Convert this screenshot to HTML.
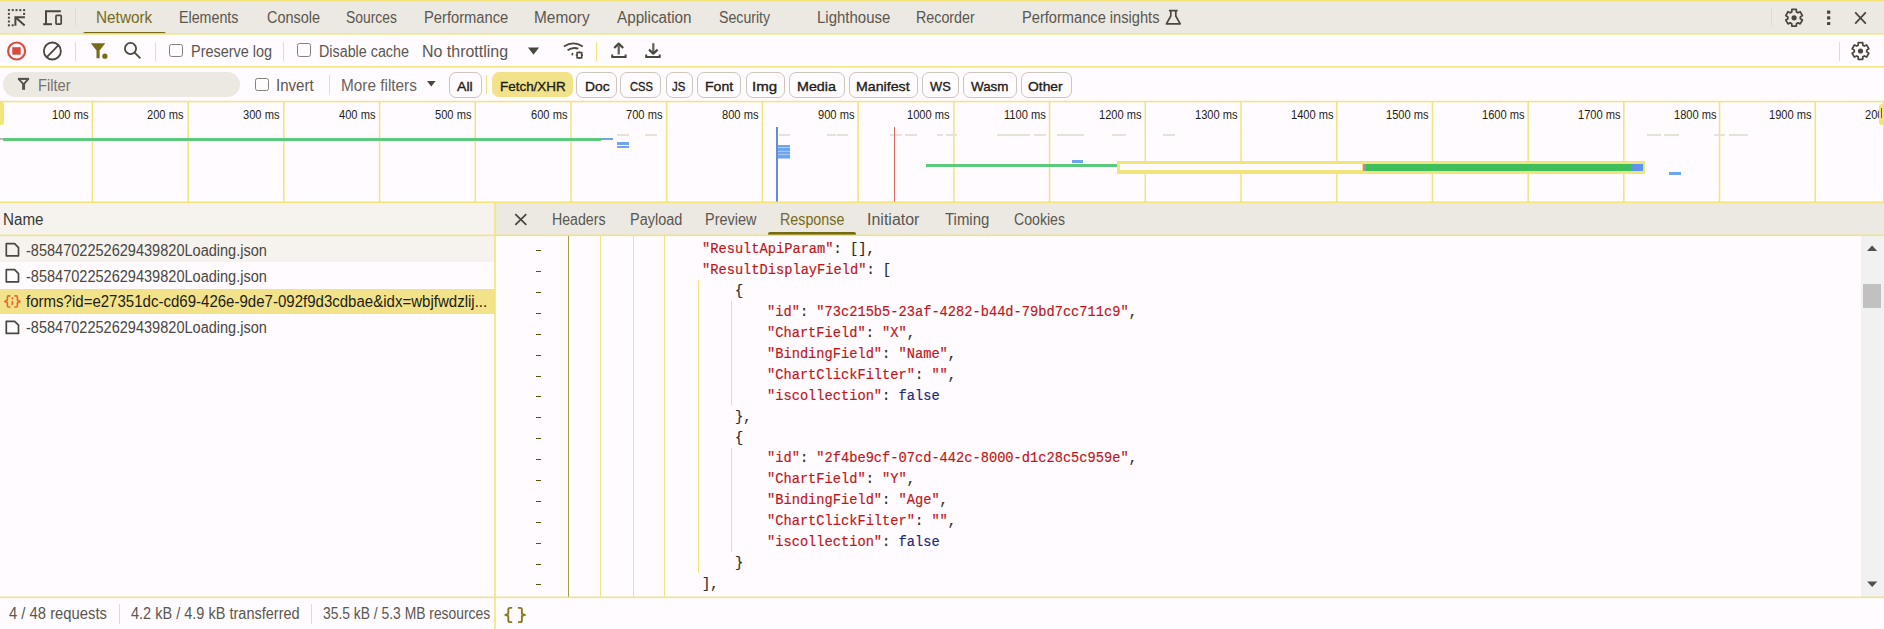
<!DOCTYPE html>
<html><head><meta charset="utf-8">
<style>
*{margin:0;padding:0;box-sizing:border-box}
html,body{width:1884px;height:629px;overflow:hidden;background:#fffbfe;font-family:"Liberation Sans",sans-serif}
.a{position:absolute}
.t{position:absolute;white-space:pre;line-height:20px;transform-origin:0 0;font-family:"Liberation Sans",sans-serif}
.y{position:absolute;background:#f2e47a}
.cl{position:absolute;white-space:pre;line-height:20px;font-family:"Liberation Mono",monospace;font-size:15.3px;color:#2b2a26;-webkit-text-stroke:0.2px currentColor;transform-origin:0 0;transform:scaleX(0.8954)}
.cl .p{color:#c0161a}
.cl .s{color:#c0161a}
.cl .b{color:#1c2a78}
.cl .x{color:#2b2a26}
.dash{position:absolute;left:536px;width:4.5px;height:1px;background:#5d4f14}
.chip{position:absolute;top:71.5px;height:26px;border:1.3px solid #cdc7bb;border-radius:7px}
.cb{position:absolute;width:14px;height:13.6px;border:1.3px solid #85827b;border-radius:2.5px}
svg{position:absolute;overflow:visible}
</style></head><body>
<!-- top bar -->
<div class="a" style="left:0;top:0;width:1884px;height:33px;background:#ece8e2"></div>
<div class="y" style="left:0;top:0;width:1884px;height:1px;background:#f2e47a"></div>
<div class="y" style="left:0;top:1px;width:1884px;height:1px;background:#eee7bb"></div>

<div class="a" style="left:83px;top:31.6px;width:83px;height:2.8px;background:#756914;border-radius:2px 2px 0 0"></div>
<div class="y" style="left:74.8px;top:8.3px;width:1.2px;height:19px"></div>
<div class="y" style="left:1771px;top:8.3px;width:1.2px;height:19px"></div>
<!-- toolbar -->

<div class="y" style="left:74.6px;top:41.5px;width:1.2px;height:19px"></div>
<div class="y" style="left:154.9px;top:41.5px;width:1.2px;height:19px"></div>
<div class="y" style="left:283.1px;top:41.5px;width:1.2px;height:19px"></div>
<div class="y" style="left:595.5px;top:41.5px;width:1.2px;height:19px"></div>
<div class="y" style="left:1838.5px;top:41.5px;width:1.2px;height:19px"></div>
<div class="cb" style="left:168.5px;top:43.5px"></div>
<div class="cb" style="left:297.3px;top:43.3px"></div>
<!-- filter bar -->
<div class="a" style="left:3px;top:72px;width:237px;height:24.5px;background:#ece8e2;border-radius:13px"></div>
<div class="cb" style="left:254.5px;top:77.6px"></div>
<div class="y" style="left:328.7px;top:74.6px;width:1.2px;height:19px"></div>
<div class="y" style="left:486px;top:74.6px;width:1.2px;height:19px"></div>
<div class="chip" style="left:449px;width:32.5px"></div>
<div class="a" style="left:492px;top:72px;width:81.2px;height:24.6px;background:#f2e38a;border-radius:7px"></div>
<div class="chip" style="left:576px;width:41.1px"></div>
<div class="chip" style="left:620.4px;width:40.7px"></div>
<div class="chip" style="left:665.6px;width:27.8px"></div>
<div class="chip" style="left:696.8px;width:43.9px"></div>
<div class="chip" style="left:745.8px;width:39px"></div>
<div class="chip" style="left:789.3px;width:55.3px"></div>
<div class="chip" style="left:849px;width:68.5px"></div>
<div class="chip" style="left:922px;width:36.7px"></div>
<div class="chip" style="left:962.7px;width:54px"></div>
<div class="chip" style="left:1020.7px;width:51.7px"></div>

<!-- timeline -->
<svg style="left:0;top:0" width="1884" height="629"><g fill="#f2e47a"><rect x="91.68" y="101" width="1.5" height="101"/>
<rect x="187.39" y="101" width="1.5" height="101"/>
<rect x="283.11" y="101" width="1.5" height="101"/>
<rect x="378.82" y="101" width="1.5" height="101"/>
<rect x="474.54" y="101" width="1.5" height="101"/>
<rect x="570.25" y="101" width="1.5" height="101"/>
<rect x="665.96" y="101" width="1.5" height="101"/>
<rect x="761.68" y="101" width="1.5" height="101"/>
<rect x="857.39" y="101" width="1.5" height="101"/>
<rect x="953.11" y="101" width="1.5" height="101"/>
<rect x="1048.82" y="101" width="1.5" height="101"/>
<rect x="1144.53" y="101" width="1.5" height="101"/>
<rect x="1240.25" y="101" width="1.5" height="101"/>
<rect x="1335.96" y="101" width="1.5" height="101"/>
<rect x="1431.68" y="101" width="1.5" height="101"/>
<rect x="1527.39" y="101" width="1.5" height="101"/>
<rect x="1623.10" y="101" width="1.5" height="101"/>
<rect x="1718.82" y="101" width="1.5" height="101"/>
<rect x="1814.53" y="101" width="1.5" height="101"/></g></svg>

<div class="y" style="left:1882.5px;top:101px;width:1.5px;height:101px"></div>
<div class="t" style="left:51.72px;top:104.80px;font-size:13px;color:#1f1d17;transform:scaleX(0.855)">100 ms</div>
<div class="t" style="left:147.49px;top:104.80px;font-size:13px;color:#1f1d17;transform:scaleX(0.855)">200 ms</div>
<div class="t" style="left:243.26px;top:104.80px;font-size:13px;color:#1f1d17;transform:scaleX(0.855)">300 ms</div>
<div class="t" style="left:339.03px;top:104.80px;font-size:13px;color:#1f1d17;transform:scaleX(0.855)">400 ms</div>
<div class="t" style="left:434.80px;top:104.80px;font-size:13px;color:#1f1d17;transform:scaleX(0.855)">500 ms</div>
<div class="t" style="left:530.57px;top:104.80px;font-size:13px;color:#1f1d17;transform:scaleX(0.855)">600 ms</div>
<div class="t" style="left:626.34px;top:104.80px;font-size:13px;color:#1f1d17;transform:scaleX(0.855)">700 ms</div>
<div class="t" style="left:722.11px;top:104.80px;font-size:13px;color:#1f1d17;transform:scaleX(0.855)">800 ms</div>
<div class="t" style="left:817.88px;top:104.80px;font-size:13px;color:#1f1d17;transform:scaleX(0.855)">900 ms</div>
<div class="t" style="left:907.47px;top:104.80px;font-size:13px;color:#1f1d17;transform:scaleX(0.855)">1000 ms</div>
<div class="t" style="left:1004.07px;top:104.80px;font-size:13px;color:#1f1d17;transform:scaleX(0.855)">1100 ms</div>
<div class="t" style="left:1099.01px;top:104.80px;font-size:13px;color:#1f1d17;transform:scaleX(0.855)">1200 ms</div>
<div class="t" style="left:1194.78px;top:104.80px;font-size:13px;color:#1f1d17;transform:scaleX(0.855)">1300 ms</div>
<div class="t" style="left:1290.55px;top:104.80px;font-size:13px;color:#1f1d17;transform:scaleX(0.855)">1400 ms</div>
<div class="t" style="left:1386.32px;top:104.80px;font-size:13px;color:#1f1d17;transform:scaleX(0.855)">1500 ms</div>
<div class="t" style="left:1482.09px;top:104.80px;font-size:13px;color:#1f1d17;transform:scaleX(0.855)">1600 ms</div>
<div class="t" style="left:1577.86px;top:104.80px;font-size:13px;color:#1f1d17;transform:scaleX(0.855)">1700 ms</div>
<div class="t" style="left:1673.63px;top:104.80px;font-size:13px;color:#1f1d17;transform:scaleX(0.855)">1800 ms</div>
<div class="t" style="left:1769.40px;top:104.80px;font-size:13px;color:#1f1d17;transform:scaleX(0.855)">1900 ms</div>
<div class="t" style="left:1865.17px;top:104.80px;font-size:13px;color:#1f1d17;transform:scaleX(0.855)">2000 ms</div>
<!-- timeline bars -->
<div class="a" style="left:0;top:138.3px;width:3px;height:2px;background:#bdbab3"></div>
<div class="a" style="left:3px;top:138px;width:598px;height:2.6px;background:#5cc97c"></div>
<div class="a" style="left:601.2px;top:137.9px;width:12.1px;height:2.6px;background:#6ea4f0"></div>
<div class="a" style="left:617px;top:142.2px;width:12px;height:2.4px;background:#6ea4f0"></div>
<div class="a" style="left:617px;top:145.5px;width:12px;height:2.4px;background:#6ea4f0"></div>
<div class="a" style="left:617.3px;top:134.4px;width:12.1px;height:2px;background:#e8e3d6"></div><div class="a" style="left:645px;top:134.4px;width:12.0px;height:2px;background:#e8e3d6"></div><div class="a" style="left:778.7px;top:134.4px;width:11.1px;height:2px;background:#e8e3d6"></div><div class="a" style="left:826.5px;top:134.4px;width:9.3px;height:2px;background:#e8e3d6"></div><div class="a" style="left:836.5px;top:134.4px;width:11.8px;height:2px;background:#e8e3d6"></div><div class="a" style="left:889.6px;top:134.4px;width:12.1px;height:2px;background:#e8e3d6"></div><div class="a" style="left:904.7px;top:134.4px;width:12.1px;height:2px;background:#e8e3d6"></div><div class="a" style="left:937px;top:134.4px;width:6.0px;height:2px;background:#e8e3d6"></div><div class="a" style="left:946px;top:134.4px;width:11.0px;height:2px;background:#e8e3d6"></div><div class="a" style="left:996.8px;top:134.4px;width:32.8px;height:2px;background:#e8e3d6"></div><div class="a" style="left:1033.7px;top:134.4px;width:12.3px;height:2px;background:#e8e3d6"></div><div class="a" style="left:1057px;top:134.4px;width:27.0px;height:2px;background:#e8e3d6"></div><div class="a" style="left:1112px;top:134.4px;width:13.5px;height:2px;background:#e8e3d6"></div><div class="a" style="left:1163px;top:134.4px;width:11.5px;height:2px;background:#e8e3d6"></div><div class="a" style="left:1646.5px;top:134.4px;width:14.1px;height:2px;background:#e8e3d6"></div><div class="a" style="left:1664px;top:134.4px;width:14.5px;height:2px;background:#e8e3d6"></div><div class="a" style="left:1713.5px;top:134.4px;width:11.5px;height:2px;background:#e8e3d6"></div><div class="a" style="left:1729px;top:134.4px;width:19.0px;height:2px;background:#e8e3d6"></div>
<div class="a" style="left:776.1px;top:127px;width:2px;height:75px;background:#5f8fd8"></div>
<div class="a" style="left:778.4px;top:145px;width:11.3px;height:14px;background:repeating-linear-gradient(#6ea4f0 0 2.3px,#a9c8f6 2.3px 3.4px)"></div>
<div class="a" style="left:893.5px;top:127px;width:1.2px;height:75px;background:#e2685c"></div>
<div class="a" style="left:926px;top:164.2px;width:191.6px;height:2.6px;background:#5cc97c"></div>
<div class="a" style="left:1071.7px;top:160px;width:11.3px;height:3px;background:#6ea4f0"></div>
<div class="a" style="left:1117px;top:161.4px;width:528px;height:12.5px;background:#f2e47a"></div>
<div class="a" style="left:1119.8px;top:164.1px;width:242.7px;height:6.3px;background:#fffbfe"></div>
<div class="a" style="left:1362.5px;top:164px;width:3px;height:7px;background:#9c9a94"></div>
<div class="a" style="left:1365.5px;top:164px;width:265px;height:7px;background:#3fbf5c"></div>
<div class="a" style="left:1630.5px;top:164px;width:12px;height:7px;background:#5e95ec"></div>
<div class="a" style="left:1668.6px;top:171.8px;width:12.2px;height:2.8px;background:#6ea4f0"></div>
<div class="a" style="left:0;top:102.4px;width:3.8px;height:23px;background:#f2e47a;border-radius:0 3px 3px 0"></div>
<div class="a" style="left:1878.8px;top:104px;width:6px;height:20.5px;background:#f2e47a;border-radius:3px 0 0 3px"></div>
<div class="a" style="left:1880.8px;top:108px;width:1.6px;height:10px;background:#6d6418"></div>

<!-- headers -->
<div class="a" style="left:0;top:203px;width:495px;height:32.3px;background:#f6f3ef"></div>
<div class="a" style="left:495px;top:203px;width:1389px;height:32.3px;background:#ece8e2"></div>

<div class="a" style="left:768.4px;top:232.3px;width:87.4px;height:2.8px;background:#756914;border-radius:2px 2px 0 0"></div>
<!-- rows -->
<div class="a" style="left:0;top:236.2px;width:494.5px;height:25.8px;background:#f6f3ef"></div>
<div class="a" style="left:0;top:288.9px;width:494.5px;height:25.5px;background:#f2e38a"></div>
<!-- code area -->
<div class="a" style="left:567.6px;top:236.2px;width:1.5px;height:361px;background:#a89c3e"></div>
<div class="y" style="left:599.6px;top:236.2px;width:1.2px;height:361px"></div>
<div class="y" style="left:632.5px;top:236.2px;width:1.2px;height:361px"></div>
<div class="y" style="left:664.3px;top:236.2px;width:1.2px;height:361px"></div>
<div class="y" style="left:697.5px;top:280.4px;width:1.2px;height:292.5px"></div>
<div class="y" style="left:730.5px;top:301.3px;width:1.2px;height:104.2px"></div>
<div class="y" style="left:730.5px;top:447.6px;width:1.2px;height:104.3px"></div>
<div class="cl" style="left:701.70px;top:239.40px"><span class="p">"ResultApiParam"</span><span class="x">: [],</span></div>
<div class="dash" style="top:250px"></div>
<div class="cl" style="left:701.70px;top:260.30px"><span class="p">"ResultDisplayField"</span><span class="x">: [</span></div>
<div class="dash" style="top:271px"></div>
<div class="cl" style="left:734.58px;top:281.20px"><span class="x">{</span></div>
<div class="dash" style="top:292px"></div>
<div class="cl" style="left:767.46px;top:302.10px"><span class="p">"id"</span><span class="x">: </span><span class="s">"73c215b5-23af-4282-b44d-79bd7cc711c9"</span><span class="x">,</span></div>
<div class="dash" style="top:313px"></div>
<div class="cl" style="left:767.46px;top:323.00px"><span class="p">"ChartField"</span><span class="x">: </span><span class="s">"X"</span><span class="x">,</span></div>
<div class="dash" style="top:334px"></div>
<div class="cl" style="left:767.46px;top:343.90px"><span class="p">"BindingField"</span><span class="x">: </span><span class="s">"Name"</span><span class="x">,</span></div>
<div class="dash" style="top:355px"></div>
<div class="cl" style="left:767.46px;top:364.80px"><span class="p">"ChartClickFilter"</span><span class="x">: </span><span class="s">""</span><span class="x">,</span></div>
<div class="dash" style="top:376px"></div>
<div class="cl" style="left:767.46px;top:385.70px"><span class="p">"iscollection"</span><span class="x">: </span><span class="b">false</span></div>
<div class="dash" style="top:396px"></div>
<div class="cl" style="left:734.58px;top:406.60px"><span class="x">},</span></div>
<div class="dash" style="top:417px"></div>
<div class="cl" style="left:734.58px;top:427.50px"><span class="x">{</span></div>
<div class="dash" style="top:438px"></div>
<div class="cl" style="left:767.46px;top:448.40px"><span class="p">"id"</span><span class="x">: </span><span class="s">"2f4be9cf-07cd-442c-8000-d1c28c5c959e"</span><span class="x">,</span></div>
<div class="dash" style="top:459px"></div>
<div class="cl" style="left:767.46px;top:469.30px"><span class="p">"ChartField"</span><span class="x">: </span><span class="s">"Y"</span><span class="x">,</span></div>
<div class="dash" style="top:480px"></div>
<div class="cl" style="left:767.46px;top:490.20px"><span class="p">"BindingField"</span><span class="x">: </span><span class="s">"Age"</span><span class="x">,</span></div>
<div class="dash" style="top:501px"></div>
<div class="cl" style="left:767.46px;top:511.10px"><span class="p">"ChartClickFilter"</span><span class="x">: </span><span class="s">""</span><span class="x">,</span></div>
<div class="dash" style="top:522px"></div>
<div class="cl" style="left:767.46px;top:532.00px"><span class="p">"iscollection"</span><span class="x">: </span><span class="b">false</span></div>
<div class="dash" style="top:543px"></div>
<div class="cl" style="left:734.58px;top:552.90px"><span class="x">}</span></div>
<div class="dash" style="top:564px"></div>
<div class="cl" style="left:701.70px;top:573.80px"><span class="x">],</span></div>
<div class="dash" style="top:584px"></div>
<!-- scrollbar -->
<div class="a" style="left:1861px;top:236.2px;width:23px;height:361px;background:#f1f1f1"></div>
<div class="a" style="left:1863.2px;top:284px;width:18px;height:23.7px;background:#c1c1c1"></div>
<svg style="left:0;top:0" width="1884" height="629">
<path d="M1867 251 L1872.1 245.5 L1877.2 251Z" fill="#505050"/>
<path d="M1867.1 581.4 L1877.3 581.4 L1872.2 586.9Z" fill="#505050"/>
</svg>


<div class="y" style="left:119px;top:604px;width:1.2px;height:20px"></div>
<div class="y" style="left:311px;top:604px;width:1.2px;height:20px"></div>
<svg style="left:0;top:0" width="1884" height="629"><g fill="#f2e47a">
<rect x="0" y="33.1" width="1884" height="1.5"/>
<rect x="0" y="66.1" width="1884" height="1.5"/>
<rect x="0" y="100.8" width="1884" height="1.5"/>
<rect x="0" y="201.5" width="1884" height="1.5"/>
<rect x="0" y="234.6" width="1884" height="1.5"/>
<rect x="0" y="596.6" width="1884" height="1.5"/>
<rect x="494.2" y="202" width="1.6" height="427"/>
</g></svg>
<div class="t" style="left:95.52px;top:7.70px;font-size:15.6px;color:#766b1c;transform:scaleX(0.9842);">Network</div>
<div class="t" style="left:179.39px;top:7.70px;font-size:15.6px;color:#5a5751;transform:scaleX(0.9143);">Elements</div>
<div class="t" style="left:266.70px;top:7.70px;font-size:15.6px;color:#5a5751;transform:scaleX(0.9268);">Console</div>
<div class="t" style="left:346.20px;top:7.70px;font-size:15.6px;color:#5a5751;transform:scaleX(0.8901);">Sources</div>
<div class="t" style="left:423.66px;top:7.70px;font-size:15.6px;color:#5a5751;transform:scaleX(0.9441);">Performance</div>
<div class="t" style="left:534.21px;top:7.70px;font-size:15.6px;color:#5a5751;transform:scaleX(0.9871);">Memory</div>
<div class="t" style="left:617.20px;top:7.70px;font-size:15.6px;color:#5a5751;transform:scaleX(0.9773);">Application</div>
<div class="t" style="left:719.40px;top:7.70px;font-size:15.6px;color:#5a5751;transform:scaleX(0.9074);">Security</div>
<div class="t" style="left:816.84px;top:7.70px;font-size:15.6px;color:#5a5751;transform:scaleX(0.9608);">Lighthouse</div>
<div class="t" style="left:916.28px;top:7.70px;font-size:15.6px;color:#5a5751;transform:scaleX(0.9151);">Recorder</div>
<div class="t" style="left:1021.96px;top:7.70px;font-size:15.6px;color:#5a5751;transform:scaleX(0.9384);">Performance insights</div>
<div class="t" style="left:190.67px;top:41.80px;font-size:15.6px;color:#5a5751;transform:scaleX(0.9270);">Preserve log</div>
<div class="t" style="left:319.08px;top:41.80px;font-size:15.6px;color:#5a5751;transform:scaleX(0.9182);">Disable cache</div>
<div class="t" style="left:422.48px;top:41.80px;font-size:15.6px;color:#5a5751;transform:scaleX(1.0230);">No throttling</div>
<div class="t" style="left:38.36px;top:76.10px;font-size:15.6px;color:#75726a;transform:scaleX(0.9414);">Filter</div>
<div class="t" style="left:276.23px;top:76.10px;font-size:15.6px;color:#5a5751;transform:scaleX(0.9672);">Invert</div>
<div class="t" style="left:341.02px;top:76.10px;font-size:15.6px;color:#67645d;transform:scaleX(0.9840);">More filters</div>
<div class="t" style="left:457.20px;top:77.20px;font-size:13.5px;color:#1f1d17;transform:scaleX(1.0464);-webkit-text-stroke:0.35px #1f1d17;">All</div>
<div class="t" style="left:499.60px;top:77.20px;font-size:13.5px;color:#1f1d17;transform:scaleX(0.9959);-webkit-text-stroke:0.35px #1f1d17;">Fetch/XHR</div>
<div class="t" style="left:584.57px;top:77.20px;font-size:13.5px;color:#1f1d17;transform:scaleX(1.0276);-webkit-text-stroke:0.35px #1f1d17;">Doc</div>
<div class="t" style="left:629.60px;top:77.20px;font-size:13.5px;color:#1f1d17;transform:scaleX(0.8251);-webkit-text-stroke:0.35px #1f1d17;">CSS</div>
<div class="t" style="left:672.30px;top:77.20px;font-size:13.5px;color:#1f1d17;transform:scaleX(0.8444);-webkit-text-stroke:0.35px #1f1d17;">JS</div>
<div class="t" style="left:704.66px;top:77.20px;font-size:13.5px;color:#1f1d17;transform:scaleX(1.0433);-webkit-text-stroke:0.35px #1f1d17;">Font</div>
<div class="t" style="left:752.49px;top:77.20px;font-size:13.5px;color:#1f1d17;transform:scaleX(1.1145);-webkit-text-stroke:0.35px #1f1d17;">Img</div>
<div class="t" style="left:796.74px;top:77.20px;font-size:13.5px;color:#1f1d17;transform:scaleX(1.0562);-webkit-text-stroke:0.35px #1f1d17;">Media</div>
<div class="t" style="left:856.25px;top:77.20px;font-size:13.5px;color:#1f1d17;transform:scaleX(1.0503);-webkit-text-stroke:0.35px #1f1d17;">Manifest</div>
<div class="t" style="left:930.20px;top:77.20px;font-size:13.5px;color:#1f1d17;transform:scaleX(0.9521);-webkit-text-stroke:0.35px #1f1d17;">WS</div>
<div class="t" style="left:971.00px;top:77.20px;font-size:13.5px;color:#1f1d17;transform:scaleX(0.9920);-webkit-text-stroke:0.35px #1f1d17;">Wasm</div>
<div class="t" style="left:1028.30px;top:77.20px;font-size:13.5px;color:#1f1d17;transform:scaleX(1.0272);-webkit-text-stroke:0.35px #1f1d17;">Other</div>
<div class="t" style="left:2.93px;top:210.20px;font-size:15.6px;color:#3a3833;transform:scaleX(0.9744);">Name</div>
<div class="t" style="left:26.40px;top:241.00px;font-size:15.6px;color:#4a4842;transform:scaleX(0.9323);">-8584702252629439820Loading.json</div>
<div class="t" style="left:26.40px;top:266.80px;font-size:15.6px;color:#4a4842;transform:scaleX(0.9323);">-8584702252629439820Loading.json</div>
<div class="t" style="left:26.40px;top:292.40px;font-size:15.6px;color:#1f1d17;transform:scaleX(0.9638);">forms?id=e27351dc-cd69-426e-9de7-092f9d3cdbae&amp;idx=wbjfwdzlij...</div>
<div class="t" style="left:26.40px;top:318.40px;font-size:15.6px;color:#4a4842;transform:scaleX(0.9323);">-8584702252629439820Loading.json</div>
<div class="t" style="left:552.19px;top:209.70px;font-size:15.6px;color:#5a5751;transform:scaleX(0.9081);">Headers</div>
<div class="t" style="left:629.87px;top:209.70px;font-size:15.6px;color:#5a5751;transform:scaleX(0.9290);">Payload</div>
<div class="t" style="left:705.37px;top:209.70px;font-size:15.6px;color:#5a5751;transform:scaleX(0.9257);">Preview</div>
<div class="t" style="left:867.07px;top:209.70px;font-size:15.6px;color:#5a5751;transform:scaleX(1.0252);">Initiator</div>
<div class="t" style="left:944.80px;top:209.70px;font-size:15.6px;color:#5a5751;transform:scaleX(0.9596);">Timing</div>
<div class="t" style="left:1013.80px;top:209.70px;font-size:15.6px;color:#5a5751;transform:scaleX(0.9056);">Cookies</div>
<div class="t" style="left:779.78px;top:209.70px;font-size:15.6px;color:#766b1c;transform:scaleX(0.9162);">Response</div>
<div class="t" style="left:8.90px;top:604.40px;font-size:15.6px;color:#5a5751;transform:scaleX(0.9491);">4 / 48 requests</div>
<div class="t" style="left:130.80px;top:604.40px;font-size:15.6px;color:#5a5751;transform:scaleX(0.9309);">4.2 kB / 4.9 kB transferred</div>
<div class="a" style="left:0;top:598px;width:490.5px;height:31px;overflow:hidden"><div class="t" style="left:323.40px;top:6.399999999999977px;font-size:15.6px;color:#5a5751;transform:scaleX(0.8886)">35.5 kB / 5.3 MB resources</div></div>
<!-- icons -->
<svg style="left:0;top:0" width="1884" height="629" fill="none" stroke="#4a4740" stroke-width="1.8">
<!-- inspect -->
<g fill="#4a4740" stroke="none"><rect x="7.9" y="9.1" width="2" height="2"/><rect x="11.7" y="9.1" width="2" height="2"/><rect x="15.5" y="9.1" width="2" height="2"/><rect x="19.3" y="9.1" width="2" height="2"/><rect x="23.1" y="9.1" width="2" height="2"/><rect x="7.9" y="12.9" width="2" height="2"/><rect x="7.9" y="16.7" width="2" height="2"/><rect x="7.9" y="20.5" width="2" height="2"/><rect x="7.9" y="24.3" width="2" height="2"/><rect x="23.1" y="12.9" width="2" height="2"/><rect x="11.7" y="24.3" width="2" height="2"/></g>
<path d="M15.4 17.2 L24.7 25.6 M15.4 25.8 V17.2 H24.9" stroke-width="2"/>
<!-- device -->
<path d="M46 24.3 V11.3 H60.8" stroke-width="2"/>
<path d="M43.2 24.2 H52" stroke-width="2"/>
<rect x="56" y="15.3" width="5.2" height="8.8" rx="0.8" stroke-width="1.7"/>
<!-- record -->
<circle cx="16.6" cy="51" r="8.5" stroke="#dd4b3e" stroke-width="2.2"/>
<rect x="12.3" y="47.2" width="8.4" height="7.5" fill="#d84a3c" stroke="none"/>
<!-- clear -->
<circle cx="52.35" cy="51" r="8.5" stroke-width="1.8"/>
<path d="M46.6 57.3 L58.5 45.1"/>
<!-- funnel filled -->
<path d="M90.8 43.2 H105.3 L99.6 50.6 V58.3 H96.5 V50.6 Z" fill="#776b18" stroke="none"/>
<circle cx="104.9" cy="56.2" r="2.6" fill="#776b18" stroke="none"/>
<!-- search -->
<circle cx="130.5" cy="48.5" r="5.6"/>
<path d="M134.6 52.6 L140.4 58.4"/>
<!-- dropdown -->
<path d="M528 47.4 H539.1 L533.5 54.7Z" fill="#4a4740" stroke="none"/>
<!-- wifi -->
<path d="M563.9 46.6 Q573.3 40.3 582.8 46.6" stroke-width="1.8"/>
<path d="M567.6 50.3 Q572.6 46.6 578.4 48.6" stroke-width="2"/>
<ellipse cx="572.4" cy="54.2" rx="0.9" ry="1.4" fill="#4a4740" stroke="none"/>
<rect x="577.1" y="52.6" width="4.6" height="5.2" stroke-width="1.6"/>
<path d="M579.4 51.2 V52.4 M579.4 57.9 V59.1 M575.8 55.2 H577 M581.8 55.2 H583" stroke-width="1.5"/>
<!-- upload -->
<path d="M618.7 54.4 V45.5" stroke="#66635d" stroke-width="2.3"/>
<path d="M614.2 48 L618.7 43.6 L623.2 48" stroke-width="2.2" stroke-linejoin="round"/>
<path d="M612.2 54.5 V56.9 H625.6 V54.5" stroke-width="2"/>
<!-- download -->
<path d="M653.3 43.2 V52" stroke="#66635d" stroke-width="2.3"/>
<path d="M649 49.6 L653.3 53.6 L657.6 49.6" stroke-width="2.2" stroke-linejoin="round"/>
<path d="M646.2 54.5 V56.9 H659.7 V54.5" stroke-width="2"/>
<!-- filter outline -->
<g stroke="#55524c"><path d="M17.9 78.9 H29.1" stroke-width="2.1"/><path d="M19 79.3 L23.6 84.4 L28 79.3" stroke-width="1.8"/><rect x="22.15" y="83.6" width="2.9" height="6.2" fill="#55524c" stroke="none"/></g>
<!-- more filters triangle -->
<path d="M427 80.9 H435.6 L431.3 86.6Z" fill="#4a4740" stroke="none"/>
<!-- flask -->
<path d="M1168.9 10.6 H1177.7 M1170.8 10.6 V16 L1166.4 23.8 H1180.2 L1175.8 16 V10.6" stroke-width="1.7" stroke-linejoin="round"/>
<!-- gear top -->
<path d="M1791.87 9.49 L1796.33 9.49 L1796.46 11.96 L1797.98 12.84 L1800.18 11.72 L1802.41 15.57 L1800.34 16.92 L1800.34 18.68 L1802.41 20.03 L1800.18 23.88 L1797.98 22.76 L1796.46 23.64 L1796.33 26.11 L1791.87 26.11 L1791.74 23.64 L1790.22 22.76 L1788.02 23.88 L1785.79 20.03 L1787.86 18.68 L1787.86 16.92 L1785.79 15.57 L1788.02 11.72 L1790.22 12.84 L1791.74 11.96Z" stroke-width="1.75" stroke-linejoin="round"/><circle cx="1794.1" cy="17.8" r="2.6" fill="#4a4740" stroke="none"/>
<!-- dots -->
<rect x="1827" y="10.6" width="3.3" height="3.2" rx="0.6" fill="#4a4740" stroke="none"/>
<rect x="1827" y="16.3" width="3.3" height="3.2" rx="0.6" fill="#4a4740" stroke="none"/>
<rect x="1827" y="21.9" width="3.3" height="3.2" rx="0.6" fill="#4a4740" stroke="none"/>
<!-- close -->
<path d="M1855.2 12.3 L1865.8 23.6 M1865.8 12.3 L1855.2 23.6" stroke-width="1.8"/>
<!-- gear 2 -->
<path d="M1858.27 42.69 L1862.73 42.69 L1862.86 45.16 L1864.38 46.04 L1866.58 44.92 L1868.81 48.77 L1866.74 50.12 L1866.74 51.88 L1868.81 53.23 L1866.58 57.08 L1864.38 55.96 L1862.86 56.84 L1862.73 59.31 L1858.27 59.31 L1858.14 56.84 L1856.62 55.96 L1854.42 57.08 L1852.19 53.23 L1854.26 51.88 L1854.26 50.12 L1852.19 48.77 L1854.42 44.92 L1856.62 46.04 L1858.14 45.16Z" stroke-width="1.75" stroke-linejoin="round"/><circle cx="1860.5" cy="51" r="2.6" fill="#4a4740" stroke="none"/>
<!-- detail close -->
<path d="M515.3 214.2 L526.3 224.8 M526.3 214.2 L515.3 224.8" stroke-width="1.8"/>
<!-- file icons -->
<path d="M6.3 243.70000000000002 H14.6 L18.5 247.60000000000002 V255.8 H6.3 Z" stroke-width="1.7" stroke-linejoin="round"/>
<path d="M6.3 269.7 H14.6 L18.5 273.6 V281.8 H6.3 Z" stroke-width="1.7" stroke-linejoin="round"/>
<path d="M6.3 321.29999999999995 H14.6 L18.5 325.2 V333.4 H6.3 Z" stroke-width="1.7" stroke-linejoin="round"/>
<!-- json icon -->
<g stroke="#e5692a" stroke-width="1.6" stroke-linejoin="round">
<path d="M10.4 295.9 H8.4 Q7.4 295.9 7.4 296.9 V300.2 L4.7 301.5 L7.4 302.8 V306 Q7.4 307 8.4 307 H10.4"/>
<path d="M14.4 295.9 H16.4 Q17.4 295.9 17.4 296.9 V300.2 L20.1 301.5 L17.4 302.8 V306 Q17.4 307 16.4 307 H14.4"/>
<circle cx="12.4" cy="298.4" r="1.05" fill="#e5692a" stroke="none"/>
<path d="M12.4 301 V303.8 L11.7 304.8" stroke-width="1.7"/>
</g>
<!-- status braces -->
<g stroke="#857a20" stroke-width="1.9" stroke-linejoin="miter">
<path d="M512.2 607.9 H510.2 Q508.3 607.9 508.3 609.8 V613.6 L505.7 614.9 L508.3 616.2 V620.2 Q508.3 622.1 510.2 622.1 H512.2"/>
<path d="M518 607.9 H520 Q521.9 607.9 521.9 609.8 V613.6 L524.5 614.9 L521.9 616.2 V620.2 Q521.9 622.1 520 622.1 H518"/>
</g>
</svg>
</body></html>
